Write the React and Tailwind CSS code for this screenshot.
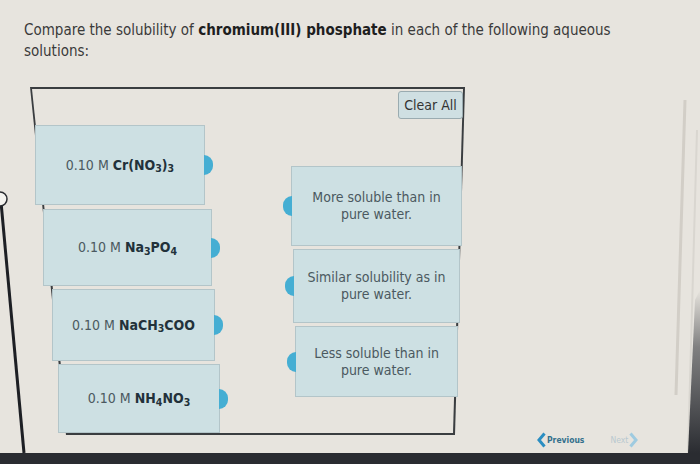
import React from "react";

const face =
  "font-['DejaVu_Sans_Condensed','DejaVu_Sans',sans-serif] [font-stretch:condensed]";

function Tab({ side }) {
  return side === "right" ? (
    <span className="absolute right-[-9px] top-1/2 -translate-y-1/2 w-[9px] h-[20px] rounded-r-full bg-[#45aed3]" />
  ) : (
    <span className="absolute left-[-9px] top-1/2 -translate-y-1/2 w-[9px] h-[20px] rounded-l-full bg-[#45aed3]" />
  );
}

function Compound({ className, children }) {
  return (
    <div
      className={`relative flex items-center justify-center border border-[#b3c5c9] bg-[#cde0e3] text-[14px] text-[#4b5960] ${className}`}
    >
      <span className="whitespace-nowrap">{children}</span>
      <Tab side="right" />
    </div>
  );
}

function Choice({ className, children }) {
  return (
    <div
      className={`relative flex items-center justify-center border border-[#b3c5c9] bg-[#cde0e3] text-center text-[14px] leading-[17px] text-[#4b5960] ${className}`}
    >
      <span>{children}</span>
      <Tab side="left" />
    </div>
  );
}

const B = ({ children }) => (
  <b className="font-bold text-[#22313a]">{children}</b>
);

export default function App() {
  return (
    <div
      className={`relative flex h-[464px] w-[700px] flex-col overflow-hidden bg-[#e7e4de] ${face}`}
    >
      {/* question */}
      <p className="pl-[24px] pt-[20px] text-[15px] leading-[21px] text-[#3a3a3a]">
        Compare the solubility of{" "}
        <b className="font-bold text-[#1e1e1e]">chromium(III) phosphate</b> in
        each of the following aqueous
        <br />
        solutions:
      </p>

      <div className="mt-[25px] flex items-end">
        {/* answer board */}
        <div className="relative ml-[30px] h-[348px] w-[435px]">
          <div className="absolute inset-0 bg-[#3a3d40] [clip-path:polygon(0_0,100%_0,calc(100%-10px)_100%,36px_100%)]" />
          <div className="absolute inset-0 bg-[#e7e4de] [clip-path:polygon(2px_2px,calc(100%-2px)_2px,calc(100%-12px)_calc(100%-2px),38px_calc(100%-2px))]" />

          <div className="relative flex h-full">
            <div className="flex flex-col items-start pt-[38px]">
              <Compound className="ml-[5px] h-[80px] w-[170px]">
                0.10 M{" "}
                <B>
                  Cr(NO<sub>3</sub>)<sub>3</sub>
                </B>
              </Compound>
              <Compound className="ml-[13px] mt-[4px] h-[77px] w-[169px]">
                0.10 M{" "}
                <B>
                  Na<sub>3</sub>PO<sub>4</sub>
                </B>
              </Compound>
              <Compound className="ml-[22px] mt-[3px] h-[72px] w-[163px]">
                0.10 M{" "}
                <B>
                  NaCH<sub>3</sub>COO
                </B>
              </Compound>
              <Compound className="ml-[28px] mt-[3px] h-[69px] w-[162px]">
                0.10 M{" "}
                <B>
                  NH<sub>4</sub>NO<sub>3</sub>
                </B>
              </Compound>
            </div>

            <div className="flex flex-1 flex-col items-end">
              <button className="mr-[2px] mt-[4px] h-[28px] w-[65px] rounded-[3px] border border-[#9aabb0] bg-[#cfdfe2] text-[14px] text-[#333]">
                Clear All
              </button>
              <Choice className="mr-[3px] mt-[47px] h-[80px] w-[171px]">
                More soluble than in
                <br />
                pure water.
              </Choice>
              <Choice className="mr-[5px] mt-[3px] h-[74px] w-[167px]">
                Similar solubility as in
                <br />
                pure water.
              </Choice>
              <Choice className="mr-[7px] mt-[3px] h-[71px] w-[163px]">
                Less soluble than in
                <br />
                pure water.
              </Choice>
            </div>
          </div>
        </div>

        {/* navigation */}
        <div className="mb-[-13px] ml-[72px] flex h-[16px] items-center text-[8.5px]">
          <svg width="9" height="16" viewBox="0 0 9 16" className="mr-[1px]">
            <path d="M7.5 1.5 L2 8 L7.5 14.5" fill="none" stroke="#2b8ec2" strokeWidth="3" strokeLinejoin="miter" />
          </svg>
          <span className="font-bold text-[#34708c]">Previous</span>
          <span className="ml-[26px] text-[#b9c9d0]">Next</span>
          <svg width="9" height="16" viewBox="0 0 9 16" className="ml-[1px]">
            <path d="M1.5 1.5 L7 8 L1.5 14.5" fill="none" stroke="#9fcbe0" strokeWidth="3" strokeLinejoin="miter" />
          </svg>
        </div>
      </div>

      {/* screen bezel */}
      <div className="mt-auto h-[11px] bg-[#2a2c31]" />

      <svg
        className="pointer-events-none absolute left-0 top-0"
        width="700"
        height="464"
        viewBox="0 0 700 464"
      >
        <defs>
          <linearGradient id="edge" x1="0" y1="0" x2="0" y2="1">
            <stop offset="0" stopColor="#3b3d42" stopOpacity="0" />
            <stop offset="0.35" stopColor="#3b3d42" stopOpacity="0.6" />
            <stop offset="1" stopColor="#2a2c31" stopOpacity="1" />
          </linearGradient>
        </defs>
        <line x1="1" y1="202" x2="24" y2="453" stroke="#1d1f24" strokeWidth="3" />
        <circle cx="0" cy="199" r="7" fill="#f4f3ef" stroke="#2a2c31" strokeWidth="1.5" />
        <line x1="685" y1="100" x2="676" y2="395" stroke="#d2cec7" strokeWidth="3" />
        <line x1="697" y1="130" x2="688" y2="453" stroke="#d9d6d0" strokeWidth="2" />
        <polygon points="700,290 700,453 688,453 695,300" fill="url(#edge)" />
      </svg>
    </div>
  );
}
